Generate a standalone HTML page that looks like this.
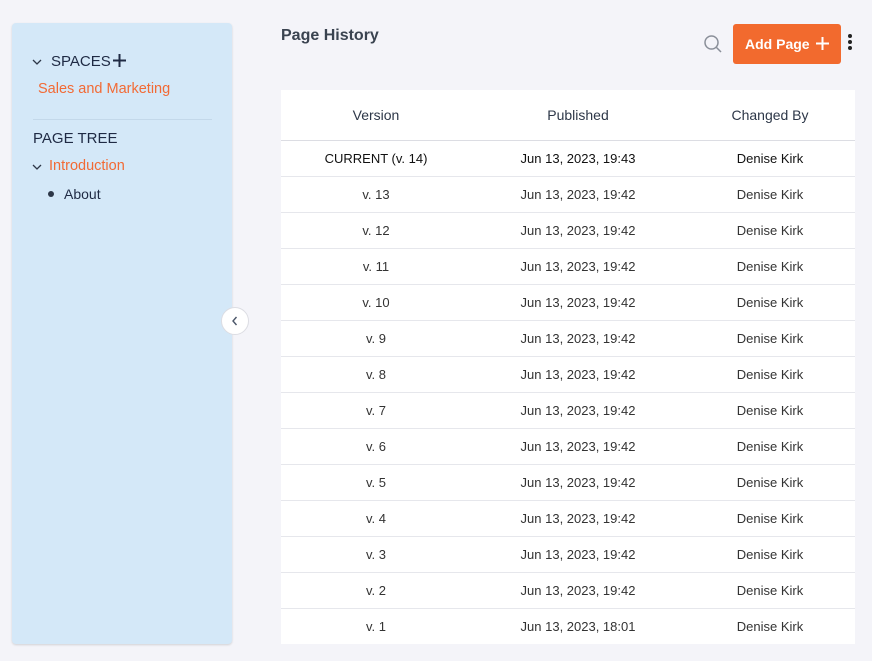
<!DOCTYPE html>
<html><head><meta charset="utf-8"><style>
*{box-sizing:border-box;margin:0;padding:0}
body{width:872px;height:661px;background:#f4f4f9;font-family:"Liberation Sans",sans-serif;color:#2d3748;position:relative;overflow:hidden}
.side{position:absolute;left:12px;top:23px;width:220px;height:621px;background:#d4e8f8;border-radius:4px;box-shadow:0 1px 2px rgba(0,0,0,.15)}
.abs{position:absolute;white-space:nowrap}
.orange{color:#f26a35}
table{position:absolute;left:281px;top:90px;width:574px;border-collapse:collapse;background:#fff;font-size:13px}
th{height:50px;font-weight:normal;font-size:14px;color:#2d3748;border-bottom:1px solid #dcdde3}
td{height:36px;text-align:center;color:#333;border-bottom:1px solid #e6e7ec}
tr.cur td{color:#111}
.btn{position:absolute;left:733px;top:24px;width:108px;height:40px;background:#f26a2e;border-radius:3px;color:#fff;font-weight:bold;font-size:14px;line-height:40px;padding-left:12px}
</style></head><body>
<div class="side">
  <svg class="abs" style="left:20px;top:35px" width="10" height="8"><path d="M1 2l4 4 4-4" stroke="#2d3748" stroke-width="1.3" fill="none"/></svg>
  <div class="abs" style="left:39px;top:30px;font-size:15px;color:#1f2a44">SPACES</div>
  <svg class="abs" style="left:101px;top:31px" width="13" height="13"><path d="M6.5 0v13M0 6.5h13" stroke="#1f2a44" stroke-width="2"/></svg>
  <div class="abs orange" style="left:26px;top:58px;font-size:14.5px">Sales and Marketing</div>
  <div class="abs" style="left:21px;top:96px;width:179px;height:1px;background:#c3d8ea"></div>
  <div class="abs" style="left:21px;top:107px;font-size:15px;color:#1f2a44">PAGE TREE</div>
  <svg class="abs" style="left:20px;top:140px" width="10" height="8"><path d="M1 2l4 4 4-4" stroke="#2d3748" stroke-width="1.3" fill="none"/></svg>
  <div class="abs orange" style="left:37px;top:135px;font-size:14.5px">Introduction</div>
  <div class="abs" style="left:36px;top:168px;width:6px;height:6px;border-radius:50%;background:#2d3748"></div>
  <div class="abs" style="left:52px;top:163px;font-size:14px;color:#1f2a44">About</div>
</div>
<div class="abs" style="left:221px;top:307px;width:28px;height:28px;border-radius:50%;background:#fff;border:1px solid #dcdde3"></div>
<svg class="abs" style="left:230px;top:315px" width="10" height="12"><path d="M6.5 2L3 6l3.5 4" stroke="#4a5568" stroke-width="1.4" fill="none"/></svg>
<div class="abs" style="left:281px;top:27px;font-size:16px;font-weight:bold;color:#3a4350">Page History</div>
<svg class="abs" style="left:703px;top:34px" width="20" height="20"><circle cx="8.5" cy="8.5" r="6.5" stroke="#8a8f99" stroke-width="1.5" fill="none"/><path d="M13.5 13.5L18 18" stroke="#8a8f99" stroke-width="1.5"/></svg>
<div class="btn">Add Page</div>
<svg class="abs" style="left:816px;top:37px" width="13" height="13"><path d="M6.5 0v13M0 6.5h13" stroke="#fff" stroke-width="2"/></svg>
<div class="abs" style="left:848px;top:34px;width:4px;height:4px;border-radius:50%;background:#222"></div>
<div class="abs" style="left:848px;top:40px;width:4px;height:4px;border-radius:50%;background:#222"></div>
<div class="abs" style="left:848px;top:46px;width:4px;height:4px;border-radius:50%;background:#222"></div>
<table>
<colgroup><col style="width:190px"><col style="width:214px"><col style="width:170px"></colgroup>
<tr><th>Version</th><th>Published</th><th>Changed By</th></tr>
<tr class="cur"><td>CURRENT (v. 14)</td><td>Jun 13, 2023, 19:43</td><td>Denise Kirk</td></tr>
<tr><td>v. 13</td><td>Jun 13, 2023, 19:42</td><td>Denise Kirk</td></tr>
<tr><td>v. 12</td><td>Jun 13, 2023, 19:42</td><td>Denise Kirk</td></tr>
<tr><td>v. 11</td><td>Jun 13, 2023, 19:42</td><td>Denise Kirk</td></tr>
<tr><td>v. 10</td><td>Jun 13, 2023, 19:42</td><td>Denise Kirk</td></tr>
<tr><td>v. 9</td><td>Jun 13, 2023, 19:42</td><td>Denise Kirk</td></tr>
<tr><td>v. 8</td><td>Jun 13, 2023, 19:42</td><td>Denise Kirk</td></tr>
<tr><td>v. 7</td><td>Jun 13, 2023, 19:42</td><td>Denise Kirk</td></tr>
<tr><td>v. 6</td><td>Jun 13, 2023, 19:42</td><td>Denise Kirk</td></tr>
<tr><td>v. 5</td><td>Jun 13, 2023, 19:42</td><td>Denise Kirk</td></tr>
<tr><td>v. 4</td><td>Jun 13, 2023, 19:42</td><td>Denise Kirk</td></tr>
<tr><td>v. 3</td><td>Jun 13, 2023, 19:42</td><td>Denise Kirk</td></tr>
<tr><td>v. 2</td><td>Jun 13, 2023, 19:42</td><td>Denise Kirk</td></tr>
<tr><td style="border-bottom:none">v. 1</td><td style="border-bottom:none">Jun 13, 2023, 18:01</td><td style="border-bottom:none">Denise Kirk</td></tr>
</table>
</body></html>
